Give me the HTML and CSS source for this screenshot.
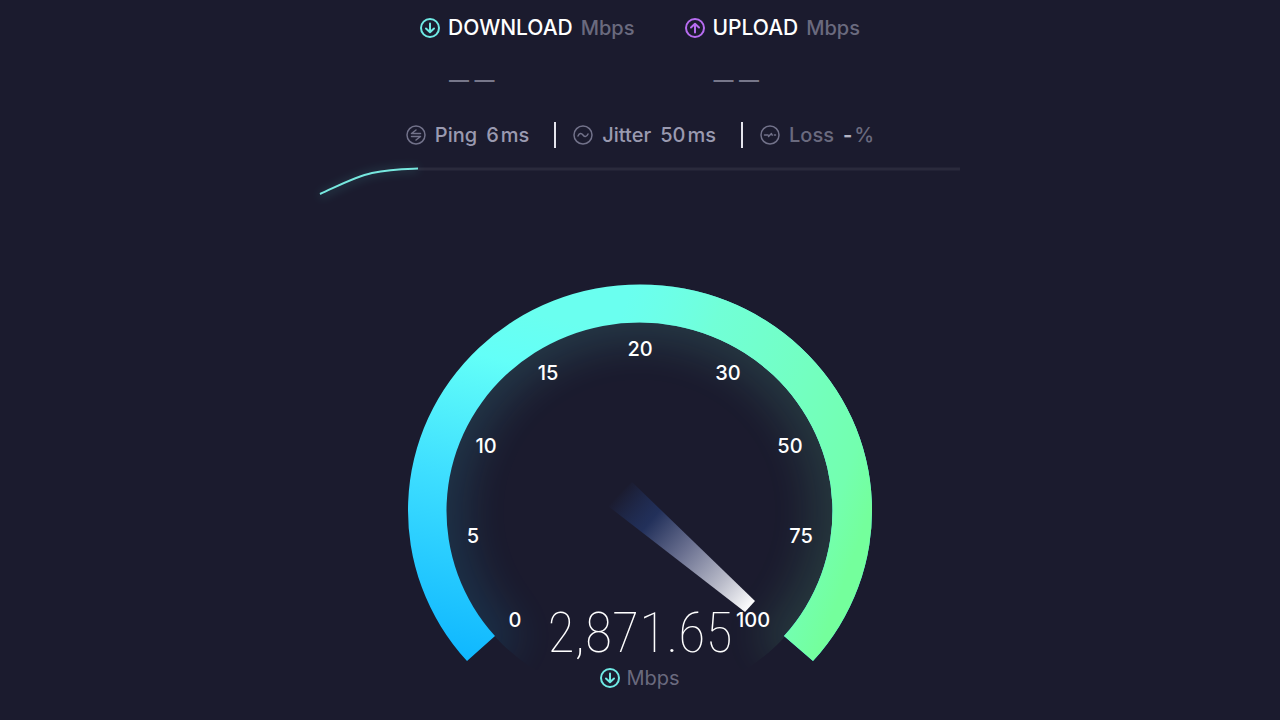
FILE: index.html
```
<!DOCTYPE html>
<html lang="en">

<head>
    <meta charset="UTF-8">
    <meta name="viewport" content="width=device-width, initial-scale=1.0">
    <title>Speed Test</title>
    <link rel="stylesheet" href="styles.css">
</head>

<body>
    <main class="speedtest">
        <section class="results">
            <div class="result">
                <h2 class="result-title">
                    <svg class="icon download"><use href="#icon-down" /></svg>
                    <span>DOWNLOAD</span>
                    <span class="unit">Mbps</span>
                </h2>
                <div class="result-value">— —</div>
            </div>
            <div class="result">
                <h2 class="result-title">
                    <svg class="icon upload"><use href="#icon-up" /></svg>
                    <span>UPLOAD</span>
                    <span class="unit">Mbps</span>
                </h2>
                <div class="result-value">— —</div>
            </div>
        </section>

        <section class="latency">
            <div class="stat">
                <svg class="icon"><use href="#icon-ping" /></svg>
                <span>Ping</span>
                <span class="stat-value"><span>6</span><span>ms</span></span>
            </div>
            <div class="stat">
                <svg class="icon"><use href="#icon-jitter" /></svg>
                <span>Jitter</span>
                <span class="stat-value"><span>50</span><span>ms</span></span>
            </div>
            <div class="stat loss">
                <svg class="icon"><use href="#icon-loss" /></svg>
                <span>Loss</span>
                <span class="stat-value"><b>-</b><span>%</span></span>
            </div>
        </section>

        <svg class="graph" viewBox="0 0 640 50">
            <defs>
                <filter id="lineGlow" x="-20%" y="-80%" width="140%" height="300%">
                    <feGaussianBlur stdDeviation="5" />
                </filter>
            </defs>
            <path d="M98 9H640" stroke="#2a2a3c" stroke-width="3" />
            <path d="M0 36C16 29 34 17 55 13C70 10 82 9 98 9" fill="none" stroke="#6afff3" stroke-width="5" opacity=".14" filter="url(#lineGlow)" />
            <path d="M0 34C16 27 34 17 52 13C70 9 82 9 98 8.500" fill="none" stroke="#77e8df" stroke-width="2" />
        </svg>

        <section class="gauge">
            <svg class="dial" viewBox="400 280 480 390">
                <defs>
                    <linearGradient id="ringBlue" gradientUnits="userSpaceOnUse" x1="480" y1="660" x2="560" y2="320">
                        <stop offset="0" stop-color="#10b8ff" />
                        <stop offset=".5" stop-color="#3fdfff" />
                        <stop offset=".85" stop-color="#63fff8" />
                        <stop offset="1" stop-color="#6affef" />
                    </linearGradient>
                    <linearGradient id="ringGreen" gradientUnits="userSpaceOnUse" x1="530" y1="420" x2="860" y2="540">
                        <stop offset=".14" stop-color="#70ffe0" stop-opacity="0" />
                        <stop offset=".4" stop-color="#72ffd4" stop-opacity=".9" />
                        <stop offset=".7" stop-color="#73ffc0" />
                        <stop offset=".9" stop-color="#73ffaf" />
                        <stop offset="1" stop-color="#74ff9c" />
                    </linearGradient>
                    <linearGradient id="needleFill" gradientUnits="userSpaceOnUse" x1="619" y1="493" x2="751" y2="608">
                        <stop offset="0" stop-color="#22376b" stop-opacity="0" />
                        <stop offset=".24" stop-color="#22305a" />
                        <stop offset=".5" stop-color="#6a7090" />
                        <stop offset=".78" stop-color="#b9bbc9" />
                        <stop offset="1" stop-color="#ffffff" />
                    </linearGradient>
                    <filter id="innerGlow" x="-20%" y="-20%" width="140%" height="140%">
                        <feGaussianBlur stdDeviation="20" />
                    </filter>
                    <clipPath id="dialFace">
                        <ellipse cx="640" cy="511" rx="194" ry="189" />
                    </clipPath>
                    <path id="ring" d="M467 661A232 226 0 1 1 813 661L784 636A193 188.500 0 1 0 495 636Z" />
                </defs>

                <g clip-path="url(#dialFace)">
                    <g filter="url(#innerGlow)" opacity=".12" stroke-width="40">
                        <use href="#ring" fill="url(#ringBlue)" stroke="url(#ringBlue)" />
                        <use href="#ring" fill="url(#ringGreen)" stroke="url(#ringGreen)" />
                    </g>
                </g>
                <use href="#ring" fill="url(#ringBlue)" />
                <use href="#ring" fill="url(#ringGreen)" />

                <g class="ticks">
                    <text x="515" y="627">0</text>
                    <text x="473" y="543">5</text>
                    <text x="486" y="453">10</text>
                    <text x="548" y="380">15</text>
                    <text x="640" y="356">20</text>
                    <text x="728" y="380">30</text>
                    <text x="790" y="453">50</text>
                    <text x="801" y="543">75</text>
                    <text x="753" y="627">100</text>
                </g>
                <path d="M632 482L755 601L745 612L608 506Z" fill="url(#needleFill)" />
            </svg>

            <div class="readout">
                <div class="speed">2,871.65</div>
                <div class="speed-unit">
                    <svg class="icon download"><use href="#icon-down" /></svg>
                    <span>Mbps</span>
                </div>
            </div>
        </section>
    </main>

    <svg class="sprite">
        <symbol id="icon-down" viewBox="0 0 20 20">
            <circle cx="10" cy="10" r="9" />
            <path d="M10 5.500V14M6 10.500L10 14.200L14 10.500" />
        </symbol>
        <symbol id="icon-up" viewBox="0 0 20 20">
            <circle cx="10" cy="10" r="9" />
            <path d="M10 14.500V6M6 9.500L10 5.800L14 9.500" />
        </symbol>
        <symbol id="icon-ping" viewBox="0 0 20 20">
            <circle cx="10" cy="10" r="9" />
            <path d="M14.500 8.500H5.500L10 5M5.500 11.500H14.500L10 15" />
        </symbol>
        <symbol id="icon-jitter" viewBox="0 0 20 20">
            <circle cx="10" cy="10" r="9" />
            <path d="M5 11C6.500 7.500 8.500 8 10 10S13.500 12.500 15 9" />
        </symbol>
        <symbol id="icon-loss" viewBox="0 0 20 20">
            <circle cx="10" cy="10" r="9" />
            <path d="M4.500 10H8M8.500 11.500L11.500 8.500M12 10H12.500M14.500 10H15.500" />
        </symbol>
    </svg>
</body>

</html>
```
FILE: styles.css
```
body,
html {
    margin: 0;
    min-height: 100%;
    background: #1b1b2e;
    color: #fff;
    font-family: Inter, 'Liberation Sans', sans-serif;
    font-size: 20px;
}

.sprite {
    display: none;
}

.icon {
    flex: none;
    width: 20px;
    height: 20px;
    fill: none;
    stroke: currentColor;
    stroke-width: 1.5;
    stroke-linecap: round;
    stroke-linejoin: round;
}

.download {
    color: #6fe9e4;
    stroke-width: 2;
}

.upload {
    color: #b76cf0;
    stroke-width: 2;
}

.speedtest {
    display: flex;
    flex-direction: column;
    align-items: center;
    padding-top: 16px;
}

.results {
    display: flex;
    gap: 50px;
}

.result-title {
    display: flex;
    align-items: center;
    gap: 8px;
    margin: 0;
    font-size: 21px;
    font-weight: 500;
    line-height: 24px;
}

.unit {
    color: #6a6a7e;
    font-size: 20px;
}

.result-value {
    margin-top: 27px;
    padding-left: 29px;
    color: #77778a;
    font-family: 'Liberation Sans', sans-serif;
    font-weight: 700;
    line-height: 24px;
}

.latency {
    display: flex;
    margin-top: 31px;
    color: #9a9ab0;
    font-weight: 500;
    line-height: 26px;
}

.stat {
    display: flex;
    align-items: center;
    gap: 9px;
}

.stat .icon {
    color: #72728a;
}

.stat + .stat {
    margin-left: 25px;
    padding-left: 17px;
    border-left: 2px solid #e4e4ec;
}

.stat-value {
    display: flex;
    gap: 2px;
}

.loss {
    color: #6a6a7e;
}

.loss b {
    color: #b4b4c4;
}

.graph {
    width: 50%;
    margin-top: 12px;
    overflow: visible;
}

.gauge {
    display: grid;
    justify-items: center;
    margin-top: 70px;
    padding-bottom: 24px;
}

.dial,
.readout {
    grid-area: 1 / 1;
}

.dial {
    width: 480px;
    margin-bottom: 20px;
}

.ticks {
    fill: #fff;
    font-size: 20px;
    font-weight: 500;
    text-anchor: middle;
}

.readout {
    align-self: end;
    text-align: center;
}

.speed {
    font-family: 'Roboto Condensed', Roboto, sans-serif;
    font-size: 56px;
    font-weight: 100;
    line-height: 66px;
}

.speed-unit {
    display: flex;
    align-items: center;
    justify-content: center;
    gap: 6px;
    color: #6a6a7e;
    line-height: 24px;
}
```
